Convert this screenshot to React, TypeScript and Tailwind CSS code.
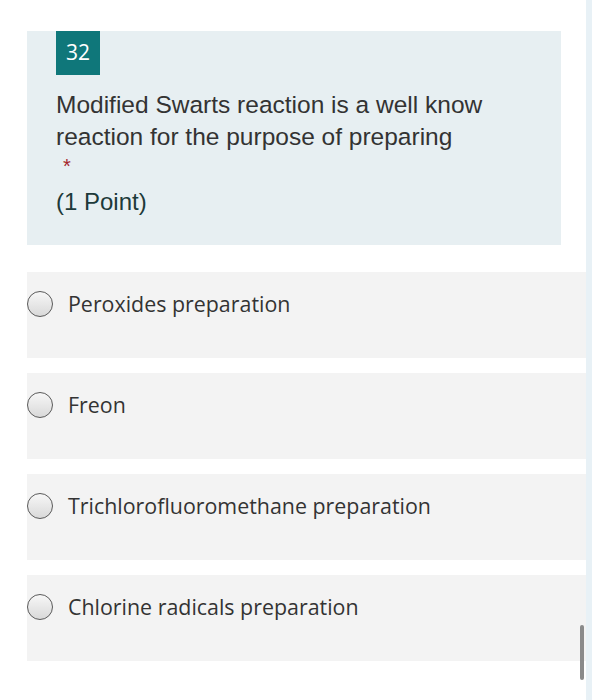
import React from "react";

const options = [
  "Peroxides preparation",
  "Freon",
  "Trichlorofluoromethane preparation",
  "Chlorine radicals preparation",
];

const Radio: React.FC = () => (
  <span className="block h-[26px] w-[26px] shrink-0 rounded-full border-[1.5px] border-[#5a5a5a] bg-gradient-to-b from-[#f7f7f7] to-[#d9d9d9]" />
);

export default function App() {
  return (
    <div className="relative h-[700px] w-[602px] overflow-hidden bg-white">
      <div className="flex flex-col pt-[31px] pl-[27px] pr-[10px]">
        <div className="h-[214px] w-[534px] bg-[#e7eff2] pl-[29px]">
          <div className="flex h-[44px] w-[44px] items-center justify-center bg-[#0f777a] font-['Open_Sans',sans-serif] text-[21px] text-white">
            32
          </div>
          <p className="mt-[14px] font-['Liberation_Sans',Arial,sans-serif] text-[24.5px] leading-[32px] text-[#333]">
            Modified Swarts reaction is a well know
            <br />
            reaction for the purpose of preparing
          </p>
          <div className="ml-[7px] mt-[2px] h-[20px] font-['Liberation_Sans',Arial,sans-serif] text-[20px] leading-[22px] text-[#a4262c]">
            *
          </div>
          <p className="mt-[12px] font-['Liberation_Sans',Arial,sans-serif] text-[24px] leading-[30px] text-[#1d3a3a]">
            (1 Point)
          </p>
        </div>

        <div className="mt-[27px] flex flex-col gap-[15px]">
          {options.map((o) => (
            <div key={o} className="flex h-[86px] w-[563px] items-start gap-[15px] bg-[#f3f3f3] pt-[19px]">
              <Radio />
              <span className="-mt-[2px] font-['Open_Sans',sans-serif] text-[21.4px] leading-[30px] text-[#333]">
                {o}
              </span>
            </div>
          ))}
        </div>
      </div>

      <div className="absolute right-[10px] top-0 h-full w-[6px] bg-[#e8f1f6]" />
      <div className="absolute left-[580px] top-[625px] h-[55px] w-[4px] rounded-sm bg-[#8a8a8a]" />
    </div>
  );
}
